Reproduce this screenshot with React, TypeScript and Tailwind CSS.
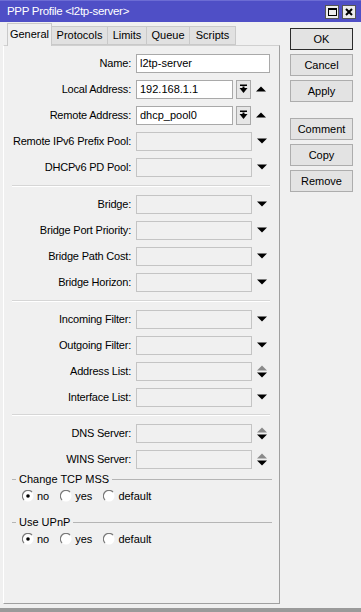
import React from "react";

type Icon = "up" | "down" | "updown" | null;

const font = { fontFamily: '"Liberation Sans", Arial, sans-serif' };

const UpTri = ({ color = "#000" }: { color?: string }) => (
  <svg width="10" height="6" viewBox="0 0 10 6">
    <polygon points="0,5.5 10,5.5 5,0.5" fill={color} />
  </svg>
);

const DownTri = ({ color = "#000" }: { color?: string }) => (
  <svg width="10" height="6" viewBox="0 0 10 6">
    <polygon points="0,0.5 10,0.5 5,5.5" fill={color} />
  </svg>
);

const SideIcon = ({ icon }: { icon: Icon }) => (
  <div className="w-[20px] flex flex-col items-center justify-center">
    {icon === "up" && <UpTri />}
    {icon === "down" && <DownTri />}
    {icon === "updown" && (
      <div className="flex flex-col gap-[1px]">
        <UpTri color="#8a8a8a" />
        <DownTri />
      </div>
    )}
  </div>
);

const DropBtn = () => (
  <div className="ml-[3px] w-[15px] h-[19px] border border-[#a9a9a9] bg-[#e6e6e6] flex items-center justify-center">
    <svg width="9" height="10" viewBox="0 0 9 10">
      <rect x="1" y="0.5" width="7" height="1.5" fill="#000" />
      <polygon points="0.5,4 8.5,4 4.5,9" fill="#000" />
      <rect x="3.5" y="2.5" width="2" height="2" fill="#000" />
    </svg>
  </div>
);

const Row = ({
  label,
  value,
  white,
  btn,
  icon,
  wide,
}: {
  label: string;
  value?: string;
  white?: boolean;
  btn?: boolean;
  icon?: Icon;
  wide?: boolean;
}) => {
  const w = wide ? "w-[134px]" : btn ? "w-[97px]" : "w-[116px]";
  return (
    <div className="h-[26px] flex items-center">
      <div className="w-[128px] text-right pr-[1px] whitespace-nowrap tracking-[-0.2px]">{label}</div>
      <div
        className={`ml-[4px] ${w} h-[19px] border ${
          white ? "border-[#a9a9a9] bg-white" : "border-[#c4c4c4] bg-[#f0f0f0]"
        } px-[3px] flex items-center whitespace-nowrap`}
      >
        {value}
      </div>
      {btn && <DropBtn />}
      {!wide && <SideIcon icon={icon ?? null} />}
    </div>
  );
};

const Sep = ({ h = 11 }: { h?: number }) => (
  <div className={`${h === 11 ? "h-[11px]" : "h-[10px]"} flex items-center pl-[8px]`}>
    <div className="w-[258px] border-t border-[#d6d6d6] border-b-white border-b" />
  </div>
);

const Radio = ({ checked, label }: { checked?: boolean; label: string }) => (
  <div className="flex items-center gap-[3px] mr-[11px]">
    <svg width="12" height="12" viewBox="0 0 12 12">
      <circle cx="6" cy="6" r="5.5" fill="#ffffff" />
      <path d="M 10 2 A 5.5 5.5 0 0 0 2 10" stroke="#7a7a7a" strokeWidth="1.2" fill="none" />
      {checked && <circle cx="6" cy="6" r="1.8" fill="#000" />}
    </svg>
    <span>{label}</span>
  </div>
);

const Group = ({ title }: { title: string }) => (
  <>
    <div className="h-[14px] flex items-center pl-[8px]">
      <div className="w-[4px] border-t border-[#b5b5b5]" />
      <span className="px-[3px] whitespace-nowrap">{title}</span>
      <div className="flex-1 mr-[7px] border-t border-[#b5b5b5]" />
    </div>
    <div className="h-[20px] flex items-center pl-[18px]">
      <Radio checked label="no" />
      <Radio label="yes" />
      <Radio label="default" />
    </div>
  </>
);

const Btn = ({ label, primary }: { label: string; primary?: boolean }) => (
  <div
    className={`h-[22px] w-[63px] flex items-center justify-center border ${
      primary ? "border-[#2b2b2b]" : "border-[#adadad]"
    } bg-[#e3e3e3]`}
  >
    {label}
  </div>
);

const tabs = ["General", "Protocols", "Limits", "Queue", "Scripts"];
const tabW = ["w-[45px]", "w-[56px]", "w-[39px]", "w-[43px]", "w-[46px]"];

export default function App() {
  return (
    <div
      className="w-[361px] h-[612px] bg-[#f0f0f0] flex flex-col text-[11px] text-black overflow-hidden border-b-4 border-[#9a9a9a]"
      style={font}
    >
      {/* Title bar */}
      <div className="h-[22px] shrink-0 bg-[#4f4fc6] border-t border-[#6c6cd4] flex items-center pl-[7px] pr-[5px]">
        <span className="text-white text-[11.5px] tracking-[-0.3px] flex-1">PPP Profile &lt;l2tp-server&gt;</span>
        <div className="flex gap-[3px]">
          <div className="w-[14px] h-[14px] bg-[#ececec] border border-[#555] flex items-center justify-center">
            <div className="w-[9px] h-[8px] border border-black border-t-2" />
          </div>
          <div className="w-[14px] h-[14px] bg-[#ececec] border border-[#555] flex items-center justify-center">
            <svg width="8" height="8" viewBox="0 0 8 8">
              <path d="M1 1 L7 7 M7 1 L1 7" stroke="#000" strokeWidth="2" />
            </svg>
          </div>
        </div>
      </div>

      <div className="flex flex-1">
        {/* Left: tabs + panel */}
        <div className="ml-[3px] w-[277px] flex flex-col">
          <div className="h-[23px] flex items-end pl-[4px] relative z-10">
            {tabs.map((t, i) =>
              i === 0 ? (
                <div
                  key={t}
                  className={`${tabW[i]} h-[23px] bg-[#f0f0f0] border border-b-0 border-[#c9c9c9] flex items-center justify-center -mb-px pb-[2px]`}
                >
                  {t}
                </div>
              ) : (
                <div
                  key={t}
                  className={`${tabW[i]} h-[19px] bg-[#e1e1e1] border border-l-0 border-[#c9c9c9] flex items-center justify-center`}
                >
                  {t}
                </div>
              )
            )}
          </div>
          <div className="h-[559px] border border-t-[#d0d0d0] border-l-white border-r-[#a0a0a0] border-b-[#a0a0a0] pt-[4px]">
            <Row label="Name:" value="l2tp-server" white wide />
            <Row label="Local Address:" value="192.168.1.1" white btn icon="up" />
            <Row label="Remote Address:" value="dhcp_pool0" white btn icon="up" />
            <Row label="Remote IPv6 Prefix Pool:" icon="down" />
            <Row label="DHCPv6 PD Pool:" icon="down" />
            <Sep />
            <Row label="Bridge:" icon="down" />
            <Row label="Bridge Port Priority:" icon="down" />
            <Row label="Bridge Path Cost:" icon="down" />
            <Row label="Bridge Horizon:" icon="down" />
            <Sep />
            <Row label="Incoming Filter:" icon="down" />
            <Row label="Outgoing Filter:" icon="down" />
            <Row label="Address List:" icon="updown" />
            <Row label="Interface List:" icon="down" />
            <Sep h={10} />
            <Row label="DNS Server:" icon="updown" />
            <Row label="WINS Server:" icon="updown" />
            <Group title="Change TCP MSS" />
            <div className="h-[9px]" />
            <Group title="Use UPnP" />
          </div>
        </div>

        {/* Right: buttons */}
        <div className="ml-[10px] pt-[6px] flex flex-col gap-[4px]">
          <Btn label="OK" primary />
          <Btn label="Cancel" />
          <Btn label="Apply" />
          <div className="h-[8px]" />
          <Btn label="Comment" />
          <Btn label="Copy" />
          <Btn label="Remove" />
        </div>
      </div>
    </div>
  );
}
